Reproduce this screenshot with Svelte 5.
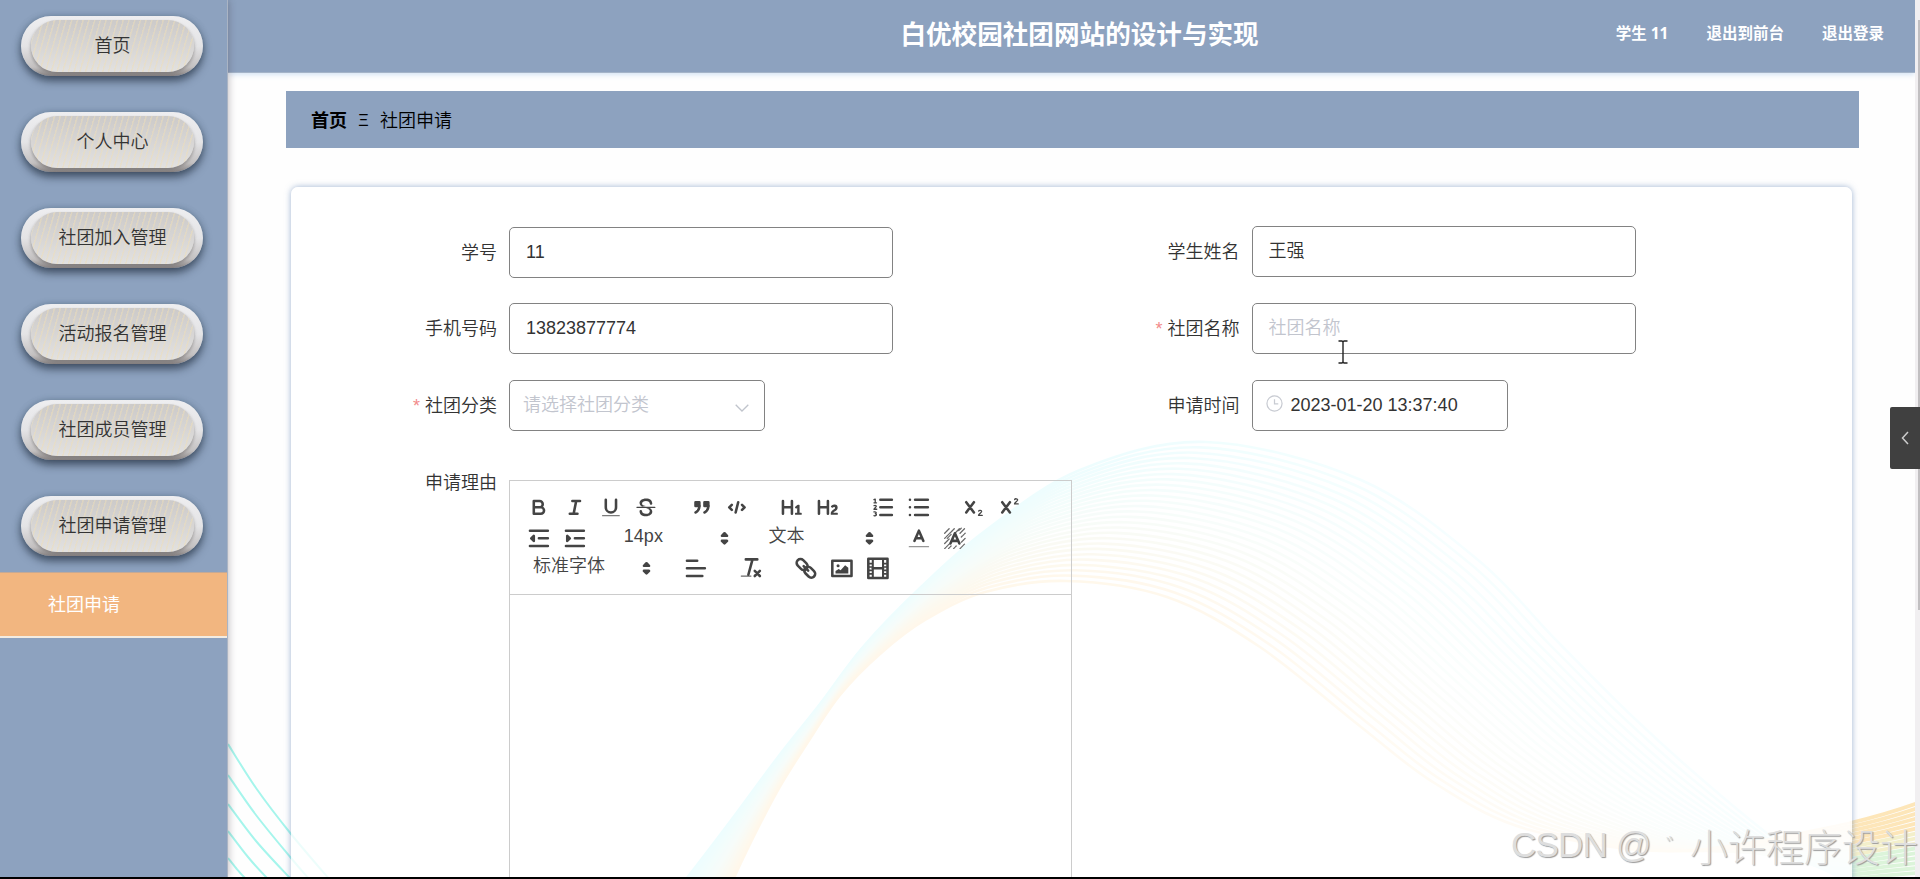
<script>
  const menu = ['首页', '个人中心', '社团加入管理', '活动报名管理', '社团成员管理', '社团申请管理'];

  const upper = [[650, 925], [697, 865], [735, 815], [778, 757], [820, 704], [863, 647], [920, 588], [985, 531], [1080, 470], [1206, 442], [1361, 480], [1478, 560], [1556, 640], [1634, 718], [1712, 788], [1790, 850], [1865, 890]];
  const lower = [[714, 930], [731, 885], [752, 840], [778, 790], [806, 745], [840, 695], [880, 654], [925, 620], [985, 592], [1066, 581], [1167, 597], [1260, 647], [1361, 727], [1436, 784], [1530, 830], [1680, 851], [1865, 820]];
  const teal = [
    [[228, 744], [256, 788], [291, 834], [330, 880]],
    [[228, 775], [256, 815], [291, 858], [310, 880]],
    [[228, 804], [256, 841], [289, 877], [300, 888]],
    [[228, 831], [248, 857], [267, 878], [280, 890]],
    [[228, 858], [236, 868], [244, 877], [260, 893]]
  ];

  function smooth(p) {
    let d = `M${p[0]}`;
    for (let i = 0; i < p.length - 1; i++) {
      const a = p[i - 1] ?? p[i], b = p[i], c = p[i + 1], e = p[i + 2] ?? c;
      d += `C${b[0] + (c[0] - a[0]) / 6} ${b[1] + (c[1] - a[1]) / 6} ${c[0] - (e[0] - b[0]) / 6} ${c[1] - (e[1] - b[1]) / 6} ${c[0]} ${c[1]}`;
    }
    return d;
  }
  function mix(t) {
    const stops = [[165, 245, 250], [210, 240, 228], [255, 215, 150]];
    const k = t < 0.5 ? 0 : 1;
    const u = t * 2 - k;
    return `rgb(${stops[k].map((v, i) => Math.round(v + (stops[k + 1][i] - v) * u)).join(',')})`;
  }
  const N = 27;
  const waves = Array.from({ length: N }, (_, i) => {
    const t = i / (N - 1);
    return {
      d: smooth(upper.map((u, j) => [u[0] + (lower[j][0] - u[0]) * t, u[1] + (lower[j][1] - u[1]) * t])),
      c: mix(t)
    };
  });
  const corner = Array.from({ length: 15 }, (_, i) => ({
    d: `M1850 ${823 + i * 4}Q1885 ${815 + i * 4.3} 1918 ${803 + i * 5}`,
    c: i < 6 ? '#fde6b9' : i < 9 ? '#f3efcb' : '#dcf4da'
  }));
</script>

{#snippet arrows()}
  <svg class="arrows" viewBox="0 0 18 18"><path class="f s" d="M7 11l2 2 2-2zM7 7l2-2 2 2z" /></svg>
{/snippet}

<div class="app">
  <aside>
    {#each menu as item}
      <div class="pill"><span>{item}</span></div>
    {/each}
    <div class="sub">社团申请</div>
  </aside>

  <main>
    <svg class="bg" viewBox="228 0 1687 877" width="1687" height="877">
      <defs>
        <linearGradient id="fade" gradientUnits="userSpaceOnUse" x1="600" y1="0" x2="1852" y2="0">
          <stop offset="0" stop-color="#fff" />
          <stop offset=".42" stop-color="#fff" stop-opacity=".95" />
          <stop offset=".7" stop-color="#fff" stop-opacity=".5" />
          <stop offset="1" stop-color="#fff" stop-opacity=".35" />
        </linearGradient>
        <mask id="veil" maskUnits="userSpaceOnUse" x="600" y="400" width="1252" height="480"><rect x="600" y="400" width="1252" height="480" fill="url(#fade)" /></mask>
      </defs>
      <g mask="url(#veil)">
        {#each waves as w}<path d={w.d} stroke={w.c} stroke-width="2.600" />{/each}
      </g>
      {#each corner as w}<path d={w.d} stroke={w.c} stroke-width="3.800" />{/each}
      {#each teal as t}<path d={smooth(t)} stroke="#a6f5ec" stroke-width="2" />{/each}
    </svg>
    <header>
      <h1>白优校园社团网站的设计与实现</h1>
      <nav><span>学生 11</span><span>退出到前台</span><span>退出登录</span></nav>
    </header>
    <div class="crumb"><b>首页</b><i>Ξ</i><span>社团申请</span></div>

    <section class="panel">
      <div class="row">
        <div class="item"><label>学号</label><div class="field">11</div></div>
        <div class="item up"><label>学生姓名</label><div class="field">王强</div></div>
      </div>
      <div class="row">
        <div class="item"><label>手机号码</label><div class="field">13823877774</div></div>
        <div class="item"><label><em>*</em>社团名称</label><div class="field hint">社团名称
          <svg class="caret" viewBox="0 0 10 24" width="10" height="24"><path d="M0.5 1H4L5 2L6 1H9.5M5 2V22M.5 23H4L5 22L6 23H9.5" fill="none" stroke="#222" stroke-width="1.4" /></svg>
        </div></div>
      </div>
      <div class="row">
        <div class="item"><label><em>*</em>社团分类</label><div class="field short hint sel">请选择社团分类
          <svg viewBox="0 0 14 8" width="14" height="8"><path d="M.7.7L7 7L13.3.7" fill="none" stroke="#c0c4cc" stroke-width="1.3" /></svg>
        </div></div>
        <div class="item"><label>申请时间</label><div class="field short date">
          <svg viewBox="0 0 18 18" width="17" height="17"><path d="M9 1a8 8 0 100 16A8 8 0 009 1zM9 4.5V9.5H13" fill="none" stroke="#c8cbd2" stroke-width="1.3" /></svg>2023-01-20 13:37:40</div></div>
      </div>
      <div class="item reason">
        <label>申请理由</label>
        <div class="editor">
          <div class="toolbar">
            <div class="group">
              <svg viewBox="0 0 18 18"><path class="s" d="M5 4h4.5a2.5 2.5 0 010 5H5zM5 9h5.5a2.5 2.5 0 010 5H5z" /></svg>
              <svg viewBox="0 0 18 18"><path class="s" d="M7 4h6M5 14h6M8 14l2-10" /></svg>
              <svg viewBox="0 0 18 18"><path class="s" d="M5 3v6a4 4 0 004 4 4 4 0 004-4V3" /><rect class="f" x="2" y="15" width="14" height="1" rx=".5" opacity=".7" /></svg>
              <svg viewBox="0 0 18 18"><path class="s thin" d="M16 9H2" /><path class="f" d="M9 8c-2.700-.5-3-1.200-3-2 0-1.300 1.200-2 3-2 2 0 2.900.9 3 2a1 1 0 002-.1C13.900 3.500 12.300 2 9 2 6 2 4 3.700 4 5.500 4 7 5 8 6 8.500zM9 10c2.700.5 3 1.200 3 2 0 1.300-1.200 2-3 2-2 0-2.900-.9-3-2a1 1 0 00-2 .1C4.100 14.500 5.700 16 9 16c3 0 5-1.700 5-3.500 0-1.500-1-2.500-2-3z" /></svg>
            </div>
            <div class="group">
              <svg viewBox="0 0 18 18"><path class="f s" d="M4 5h3v3H4zM11 5h3v3h-3z" /><path class="f s" d="M7 8c0 4.031-3 5-3 5M14 8c0 4.031-3 5-3 5" /></svg>
              <svg viewBox="0 0 18 18"><path class="s" d="M5 7L3 9l2 2M13 7l2 2-2 2M10 5l-2 8" /></svg>
            </div>
            <div class="group">
              <svg viewBox="0 0 18 18"><path class="f" d="M10,4V14a1,1,0,0,1-2,0V10H3v4a1,1,0,0,1-2,0V4A1,1,0,0,1,3,4V8H8V4a1,1,0,0,1,2,0Zm6.06787,9.209H14.98975V7.59863a.54085.54085,0,0,0-.605-.60547h-.62744a1.01119,1.01119,0,0,0-.748.29688L11.645,8.56641a.5435.5435,0,0,0-.022.8584l.28613.30762a.53861.53861,0,0,0,.84717.0332l.09912-.08789a1.2137,1.2137,0,0,0,.2417-.35254h.02246s-.01123.30859-.01123.60547V13.209H12.041a.54085.54085,0,0,0-.605.60547v.43945a.54085.54085,0,0,0,.605.60547h4.02686a.54085.54085,0,0,0,.605-.60547v-.43945A.54085.54085,0,0,0,16.06787,13.209Z" /></svg>
              <svg viewBox="0 0 18 18"><path class="f" d="M16.73975,13.81445v.43945a.54085.54085,0,0,1-.605.60547H11.855a.58392.58392,0,0,1-.64893-.60547V14.0127c0-2.90527,3.39941-3.42187,3.39941-4.55469a.77675.77675,0,0,0-.84717-.78125,1.17684,1.17684,0,0,0-.83594.38477c-.2749.26367-.561.374-.85791.13184l-.4292-.34082c-.30811-.24219-.38525-.51758-.1543-.81445a2.97155,2.97155,0,0,1,2.45361-1.17676,2.45393,2.45393,0,0,1,2.68408,2.40918c0,2.45312-3.1792,2.92676-3.27832,3.93848h2.79443A.54085.54085,0,0,1,16.73975,13.81445ZM9,3A.99974.99974,0,0,0,8,4V8H3V4A1,1,0,0,0,1,4V14a1,1,0,0,0,2,0V10H8v4a1,1,0,0,0,2,0V4A.99974.99974,0,0,0,9,3Z" /></svg>
            </div>
            <div class="group">
              <svg viewBox="0 0 18 18"><path class="s" d="M7 3h9M7 9h9M7 15h9" /><path class="s thin" d="M2 5.500h2M3 5.500v-3l-1 .5M2 7.700c1-.7 2 0 1.700.8L2 10.500h2.200M2 12.600c1.500-.5 2.500.9 1 1.400 1.700.3.700 2-1 1.500" /></svg>
              <svg viewBox="0 0 18 18"><path class="s" d="M6 3h10M6 9h10M6 15h10M2 3h.01M2 9h.01M2 15h.01" /></svg>
            </div>
            <div class="group">
              <svg viewBox="0 0 18 18"><path class="s" d="M3 5l6 8M9 5l-6 8" /><path class="s thin" d="M12.700 12c.2-1 2.500-1 2.300.4-.2.900-2.200 1.700-2.400 2.900h2.900" /></svg>
              <svg viewBox="0 0 18 18"><path class="s" d="M3 5l6 8M9 5l-6 8" /><path class="s thin" d="M12.700 3c.2-1 2.500-1 2.300.4-.2.900-2.200 1.700-2.400 2.900h2.900" /></svg>
            </div>
            <div class="group">
              <svg viewBox="0 0 18 18"><path class="s" d="M2 15h14M2 3h14M9 9h7" /><path class="f s" d="M5 7v4L3 9z" /></svg>
              <svg viewBox="0 0 18 18"><path class="s" d="M2 15h14M2 3h14M9 9h7" /><path class="f s" d="M3 7v4l2-2z" /></svg>
            </div>
            <div class="group picker">14px{@render arrows()}</div>
            <div class="group picker">文本{@render arrows()}</div>
            <div class="group">
              <svg viewBox="0 0 18 18"><path class="s thin" d="M1.500 15.500h15" opacity=".55" /><path class="s" d="M5.500 11L9 3l3.500 8M11.630 9H6.380" /></svg>
              <svg viewBox="0 0 18 18"><path class="s thin" stroke-dasharray="1.100 .8" d="M1 5l4-4M1 9l8-8M1 13l4-4M9 5l4-4M1 17l4-4M13 5l4-4M14 8l3-3M14 12l3-3M13 17l4-4M8 17l2-2M4 17l2-2M3 9l3-3M12 3l2-2" opacity=".8" /><path class="s" d="M5.500 13L9 5l3.500 8M11.630 11H6.380" /></svg>
            </div>
            <div class="group picker font">标准字体{@render arrows()}</div>
            <div class="group">
              <svg viewBox="0 0 18 18"><path class="s" d="M2 9h14M2 15h12M2 3h8" /></svg>
            </div>
            <div class="group">
              <svg viewBox="0 0 18 18"><path class="s" d="M5 2h9M7 14L10 3M12 11l4 4M16 11l-4 4" /><rect class="f" x="1" y="14.500" width="8.500" height="1" rx=".5" opacity=".8" /></svg>
            </div>
            <div class="group">
              <svg viewBox="0 0 18 18"><g transform="rotate(45 9 9)"><rect class="s" x="0" y="6" width="9.600" height="6" rx="3" /><rect class="s" x="8.400" y="6" width="9.600" height="6" rx="3" /><path class="s" d="M6.500 9h5" /></g></svg>
              <svg viewBox="0 0 18 18"><path class="s" d="M1.500 3h15v12h-15z" /><circle class="f" cx="6" cy="7" r="1.200" /><path class="f" d="M4 13v-2l2.500-1.500L8 10.500l3.500-4L14 8.500V13z" /></svg>
              <svg viewBox="0 0 18 18"><path class="s" d="M1.500 1.500h15v15h-15zM5 9h8" /><path class="f" d="M4.200 2h1.600v14H4.200zM12.200 2h1.600v14h-1.600zM2 4.700h3v1.300H2zM2 7.300h3v1.300H2zM2 10h3v1.300H2zM2 12.700h3V14H2zM13 4.700h3v1.300h-3zM13 7.300h3v1.300h-3zM13 10h3v1.300h-3zM13 12.700h3V14h-3z" /></svg>
            </div>
          </div>
        </div>
      </div>
    </section>
  </main>

  <div class="scroll"><div class="thumb"></div></div>
  <div class="drawer"><svg viewBox="0 0 8 14" width="8" height="14"><path d="M7 1L1.500 7L7 13" fill="none" stroke="#ccc" stroke-width="1.500" /></svg></div>
  <div class="mark"><span class="en">CSDN @</span><span class="dots">゛</span><span>小许程序设计</span></div>
</div>

<style>
  :global(body) { margin: 0; background: #fff; overflow: hidden; }
  .app { position: relative; display: flex; box-sizing: border-box; width: 1920px; height: 879px; border-bottom: 2px solid #000; overflow: hidden; background: #fefefe; font: 350 18px/1 "Liberation Sans", "Noto Sans CJK SC", sans-serif; color: #333; }
  aside { position: relative; z-index: 2; box-sizing: border-box; width: 228px; flex: none; padding-top: 15.500px; background: #8da2bf; border-right: 1px solid #aab4c4; box-shadow: 1px 0 7px rgba(60, 50, 60, .3); }
  .pill { box-sizing: border-box; width: 182px; height: 60px; margin: 0 0 36px 21px; padding: 4px 9px 4px 10px; border-radius: 30px; background: linear-gradient(#eeeef0 0%, #e4e4e6 50%, #c4c1c1 85%, #858080 100%); box-shadow: 0 5px 9px rgba(20, 30, 45, .6), 0 0 6px rgba(70, 100, 120, .35); }
  .pill span { display: flex; align-items: center; justify-content: center; box-sizing: border-box; height: 52px; border-radius: 26px; background: repeating-linear-gradient(106deg, rgba(238, 222, 185, .5) 0 1px, transparent 2px 5.500px), linear-gradient(#cccac9, #e2e1e0); box-shadow: -1px 2px 3px rgba(110, 105, 105, .35), 1px 2px 3px rgba(110, 105, 105, .3); }
  .sub { box-sizing: border-box; height: 66px; margin-top: -20px; padding: 23px 0 0 48px; background: #f2b680; border-bottom: 2px solid #f3ece2; border-top: 1px solid #c5a995; color: #fff; font-weight: 400; }
  main { position: relative; flex: 1; min-width: 0; }
  .bg { position: absolute; left: 0; top: 0; fill: none; }
  header { position: relative; display: flex; align-items: center; justify-content: flex-end; height: 73px; background: #8da2bf; box-shadow: 0 1px 6px rgba(120, 170, 225, .4); color: #fff; border-bottom: 1px solid #a4b4c8; box-sizing: border-box; }
  h1 { margin: 0 357px 2px 0; font-size: 25.600px; line-height: 36px; font-weight: 700; white-space: nowrap; }
  nav { display: flex; gap: 38px; margin: 0 31px 6px 0; font: 700 15.500px/24px "Noto Sans", "Noto Sans CJK SC", sans-serif; white-space: nowrap; }
  .crumb { position: relative; display: flex; align-items: center; box-sizing: border-box; width: 1573px; height: 57px; margin: 18px 0 0 58px; padding: 2px 0 0 25px; background: #8da2bf; color: #000; }
  .crumb i { width: 33px; text-align: center; font-style: normal; font-size: 16px; }
  .panel { position: relative; box-sizing: border-box; width: 1561px; height: 720px; margin: 38.500px 0 0 63px; padding-top: 40px; border-radius: 7px; background: rgba(255, 255, 255, .8); box-shadow: 0 0 6px rgba(95, 130, 180, .6); }
  .row { display: grid; grid-template-columns: 742.500px 1fr; height: 76.800px; }
  .item { display: flex; align-items: flex-start; }
  .up { margin-top: -1px; }
  label { box-sizing: border-box; width: 218px; padding: 1px 12px 0 0; line-height: 51px; text-align: right; white-space: nowrap; }
  em { margin-right: 5px; color: #f28b8b; font-style: normal; }
  .field { position: relative; display: flex; align-items: center; box-sizing: border-box; width: 384px; height: 51px; padding: 0 16px 1px; border: 1.500px solid #828282; border-radius: 5px; background: rgba(255, 255, 255, .6); white-space: nowrap; }
  .short { width: 256px; }
  .hint { color: #c2c5ce; }
  .sel { justify-content: space-between; padding: 0 15px 2px 13px; }
  .sel svg { margin-top: 6px; }
  .date { padding-left: 13px; gap: 8px; }
  .date svg { margin-top: -3px; }
  .caret { position: absolute; left: 85px; top: 36px; }
  .editor { box-sizing: border-box; width: 563px; height: 500px; margin-top: 23px; border: 1px solid #ccc; }
  .toolbar { display: flex; flex-wrap: wrap; box-sizing: border-box; height: 114px; padding: 11px 9px 0 11px; border-bottom: 1px solid #ccc; align-content: flex-start; }
  .group { display: flex; height: 30.700px; margin-right: 19.200px; }
  .group svg { box-sizing: border-box; width: 35.840px; height: 30.700px; padding: 3.840px 6.400px; }
  .picker { box-sizing: border-box; justify-content: space-between; width: 125.500px; padding: 0 1px 0 12px; line-height: 27px; color: #444; white-space: nowrap; }
  .font { width: 138px; }
  .picker svg.arrows { width: 23px; padding: 3.840px 0; }
  .s { fill: none; stroke: #444; stroke-width: 2; stroke-linecap: round; stroke-linejoin: round; }
  .thin { stroke-width: 1; }
  .s.f, .f { fill: #444; }
  .scroll { position: relative; width: 5px; background: #f1eff1; }
  .thumb { width: 2px; height: 590px; margin: 20px 0 0 3px; background: #c1bfc1; }
  .drawer { position: absolute; z-index: 3; right: 0; top: 407px; display: flex; align-items: center; justify-content: center; width: 30px; height: 62px; background: #404040; border-radius: 2px 0 0 2px; }
  .mark { position: absolute; z-index: 4; left: 1511px; top: 817px; display: flex; height: 56px; align-items: center; font: 300 38px/54px "Noto Sans CJK SC", sans-serif; color: #dedede; text-shadow: 1px 1px 1px #9a9a9a; white-space: nowrap; }
  .en { width: 155px; font: 300 35px/54px "Liberation Sans", sans-serif; letter-spacing: -.8px; }
  .dots { width: 24px; font-size: 23px; line-height: 46px; }
</style>
